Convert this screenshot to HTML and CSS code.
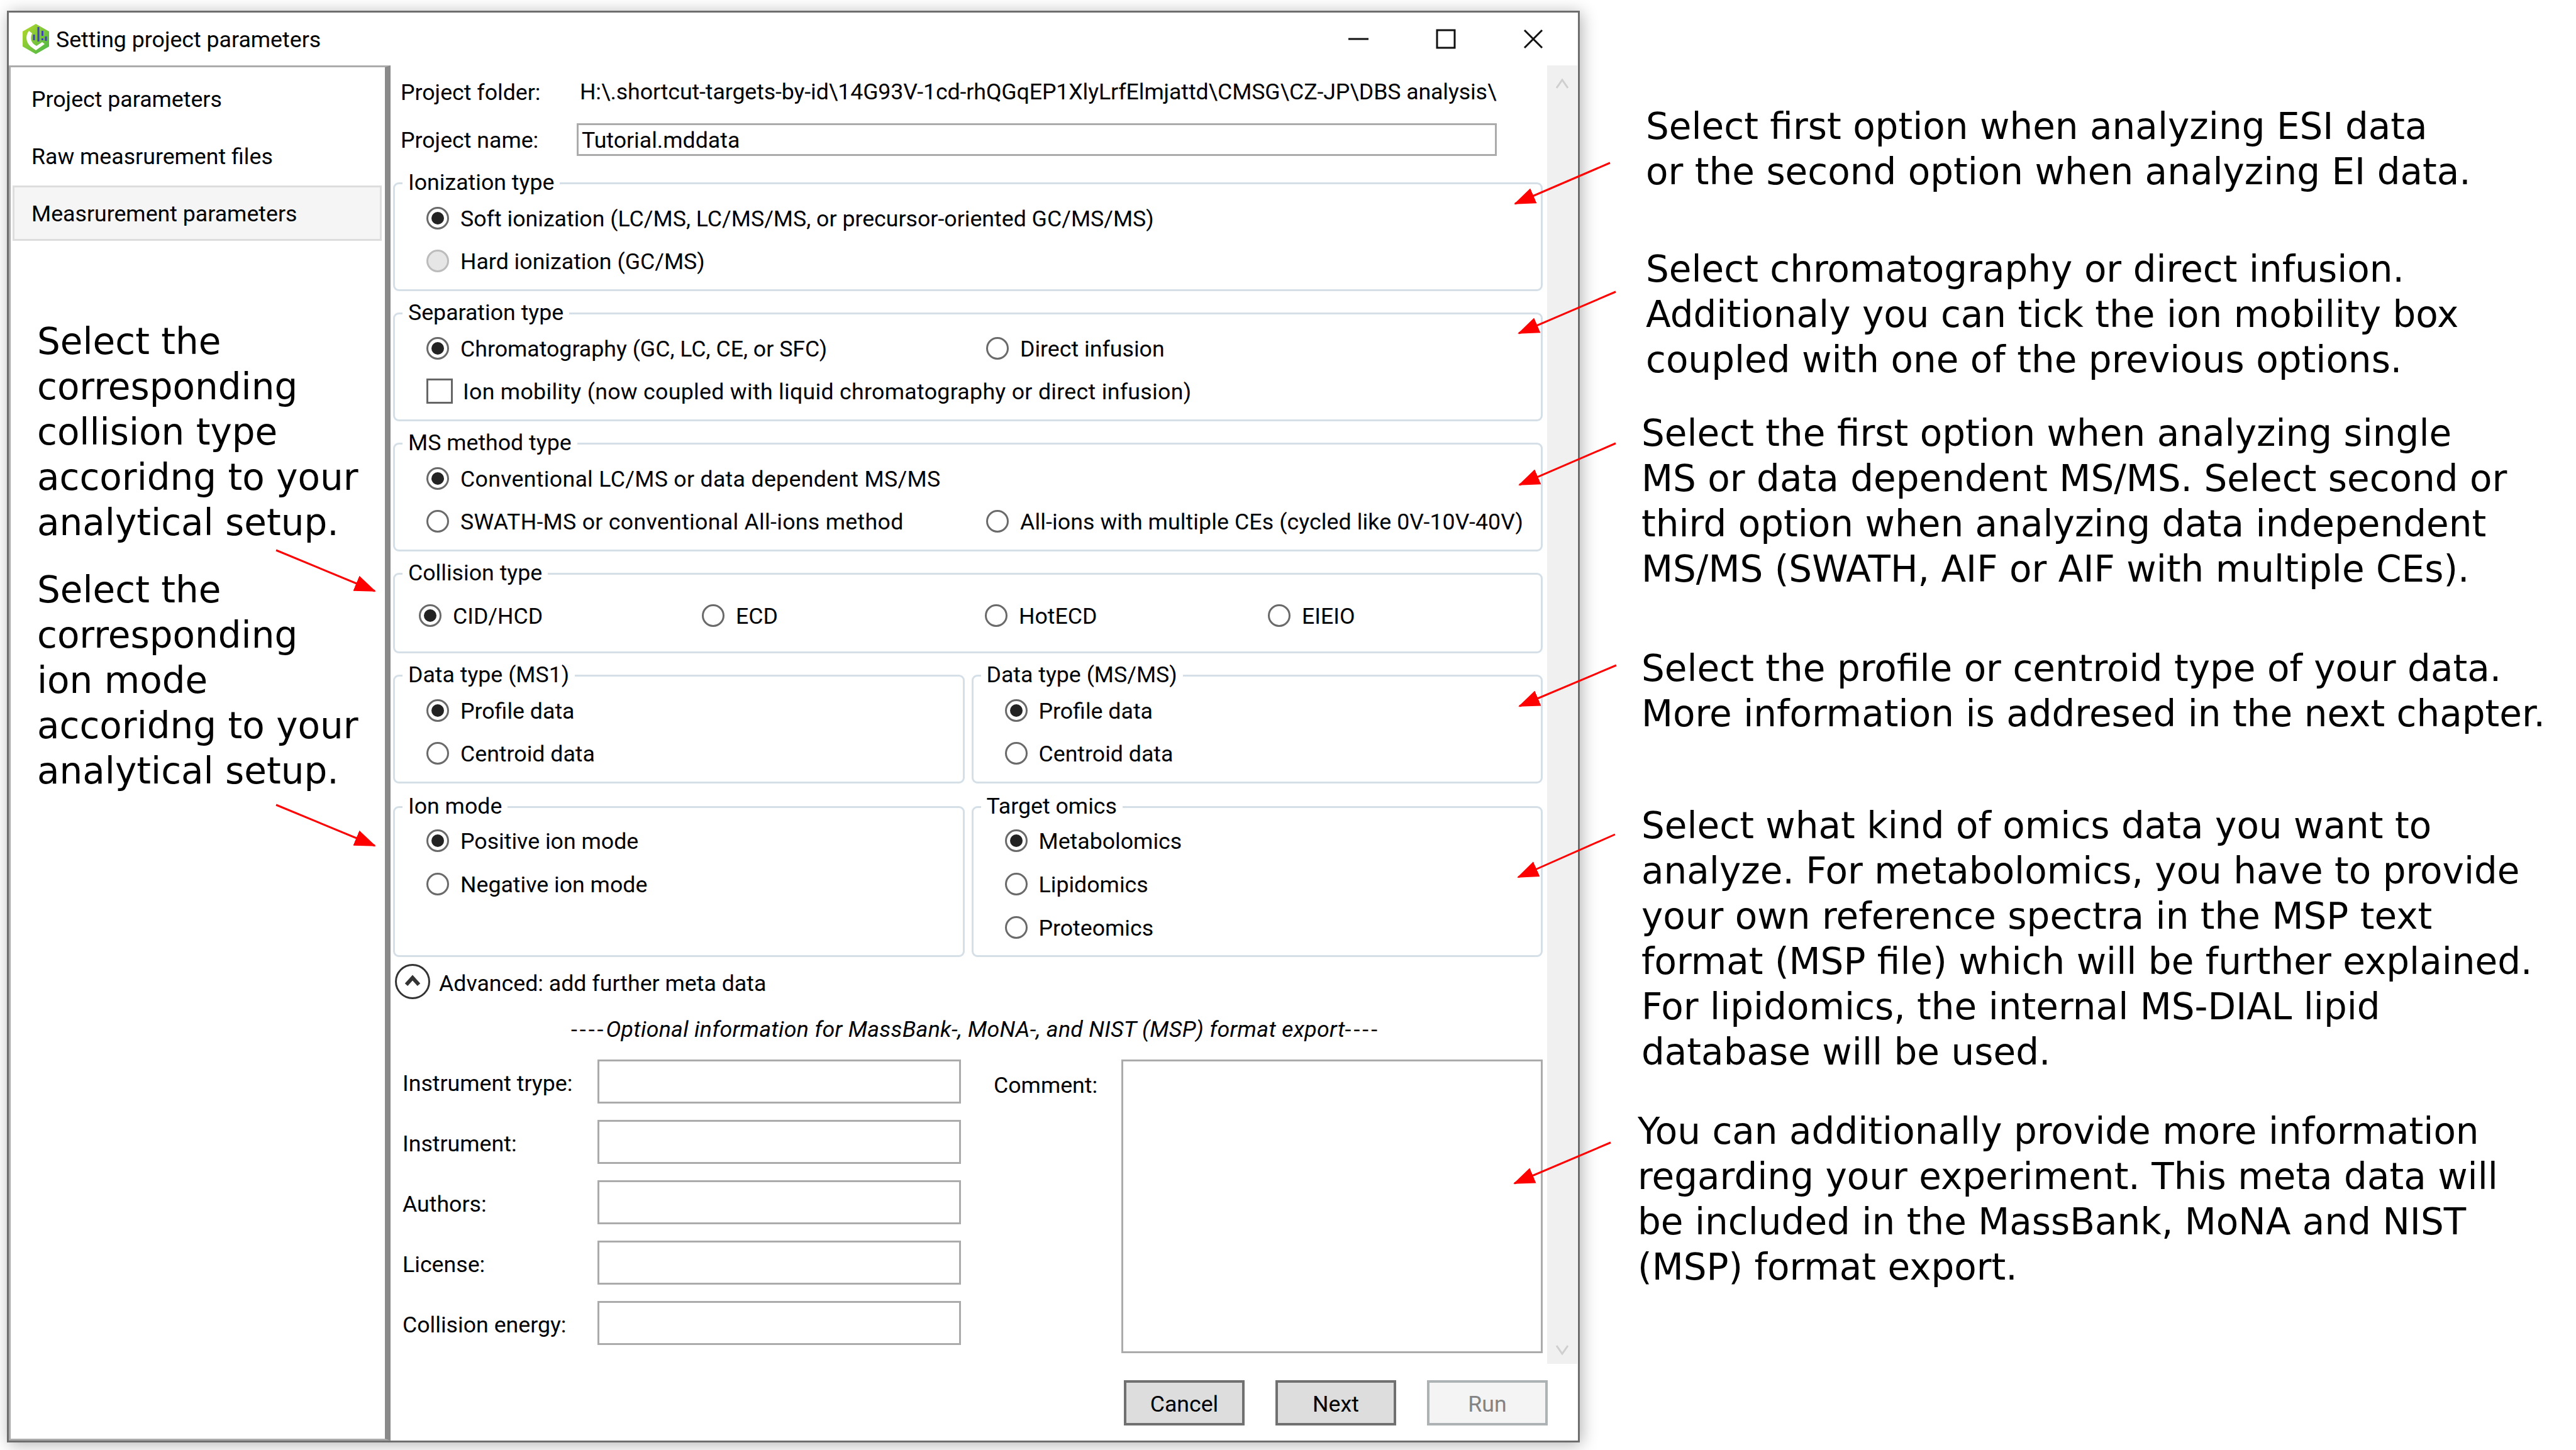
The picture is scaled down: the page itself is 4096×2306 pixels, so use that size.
FILE: index.html
```html
<!DOCTYPE html>
<html lang="en">
<head>
<meta charset="utf-8">
<title>Setting project parameters</title>
<link rel="stylesheet" href="styles.css">
</head>
<body>
<div class="page">
  <div class="window">
    <header class="titlebar">
      <svg class="logo" viewBox="0 0 42 48">
        <defs><linearGradient id="hex" x1="0" y1="0" x2="1" y2="1"><stop offset="0" stop-color="#b5d82a"/><stop offset="1" stop-color="#46b649"/></linearGradient></defs>
        <polygon points="21,0 42,12 42,36 21,48 0,36 0,12" fill="url(#hex)"/>
        <path d="M10 11 C3 20 6 31 14 37 L21 42 L35 32 L31 29 L22 35 C14 31 11 24 15 15 Z" fill="#fff"/>
        <path d="M18 17v9M25 5v23M31.5 11v8M31.5 23v3M37 20v7" stroke="#3f45a8" stroke-width="3" fill="none"/>
      </svg>
      <span class="title">Setting project parameters</span>
      <div class="controls">
        <span class="control"><svg viewBox="0 0 32 32"><path d="M0 16H32" /></svg></span>
        <span class="control"><svg viewBox="0 0 32 32"><rect x="2" y="2" width="28" height="28"/></svg></span>
        <span class="control"><svg viewBox="0 0 32 32"><path d="M2 2L30 30M30 2L2 30"/></svg></span>
      </div>
    </header>
    <div class="body">
      <aside class="sidebar">
        <nav class="nav">
          <div class="nav-item">Project parameters</div>
          <div class="nav-item">Raw measrurement files</div>
          <div class="nav-item selected">Measrurement parameters</div>
        </nav>
        <div class="side-notes">
          <p class="note">Select the<br>corresponding<br>collision type<br>accoridng to your<br>analytical setup.</p>
          <p class="note">Select the<br>corresponding<br>ion mode<br>accoridng to your<br>analytical setup.</p>
        </div>
      </aside>
      <main class="main">
        <div class="content">
          <div class="form-row"><span class="row-label">Project folder:</span><span class="folder">H:\.shortcut-targets-by-id\14G93V-1cd-rhQGqEP1XlyLrfElmjattd\CMSG\CZ-JP\DBS analysis\</span></div>
          <div class="form-row"><span class="row-label">Project name:</span><div class="name-box">Tutorial.mddata</div></div>

          <div class="groups">
            <section class="group h-std">
              <span class="legend">Ionization type</span>
              <div class="option"><span class="radio on"></span>Soft ionization (LC/MS, LC/MS/MS, or precursor-oriented GC/MS/MS)</div>
              <div class="option"><span class="radio off"></span>Hard ionization (GC/MS)</div>
            </section>
            <section class="group h-std">
              <span class="legend">Separation type</span>
              <div class="option"><div class="cell wide"><span class="radio on"></span>Chromatography (GC, LC, CE, or SFC)</div><div class="cell"><span class="radio"></span>Direct infusion</div></div>
              <div class="option spread"><span class="check"></span>Ion mobility (now coupled with liquid chromatography or direct infusion)</div>
            </section>
            <section class="group h-std">
              <span class="legend">MS method type</span>
              <div class="option spread"><span class="radio on"></span>Conventional LC/MS or data dependent MS/MS</div>
              <div class="option"><div class="cell wide spread"><span class="radio"></span>SWATH-MS or conventional All-ions method</div><div class="cell slight"><span class="radio"></span>All-ions with multiple CEs (cycled like 0V-10V-40V)</div></div>
            </section>
            <section class="group h-collision">
              <span class="legend">Collision type</span>
              <div class="option">
                <div class="cell four"><span class="radio on"></span>CID/HCD</div>
                <div class="cell four"><span class="radio"></span>ECD</div>
                <div class="cell four"><span class="radio"></span>HotECD</div>
                <div class="cell four"><span class="radio"></span>EIEIO</div>
              </div>
            </section>
            <div class="pair">
              <section class="group h-std half">
                <span class="legend">Data type (MS1)</span>
                <div class="option"><span class="radio on"></span>Profile data</div>
                <div class="option"><span class="radio"></span>Centroid data</div>
              </section>
              <section class="group h-std half">
                <span class="legend">Data type (MS/MS)</span>
                <div class="option"><span class="radio on"></span>Profile data</div>
                <div class="option"><span class="radio"></span>Centroid data</div>
              </section>
            </div>
            <div class="pair lower">
              <section class="group h-tall half">
                <span class="legend">Ion mode</span>
                <div class="option"><span class="radio on"></span>Positive ion mode</div>
                <div class="option"><span class="radio"></span>Negative ion mode</div>
              </section>
              <section class="group h-tall half">
                <span class="legend">Target omics</span>
                <div class="option"><span class="radio on"></span>Metabolomics</div>
                <div class="option"><span class="radio"></span>Lipidomics</div>
                <div class="option"><span class="radio"></span>Proteomics</div>
              </section>
            </div>
          </div>

          <div class="advanced">
            <svg class="expander" viewBox="0 0 56 56"><circle cx="28" cy="28" r="26.5"/><path d="M18 33L28 22L38 33"/></svg>
            <span class="advanced-label">Advanced: add further meta data</span>
          </div>
          <div class="optional"><span class="dashes">----</span><em>Optional information for MassBank-, MoNA-, and NIST (MSP) format export</em><span class="dashes">----</span></div>

          <div class="meta">
            <div class="fields">
              <div class="field"><span class="field-label">Instrument trype:</span><div class="box"></div></div>
              <div class="field"><span class="field-label">Instrument:</span><div class="box"></div></div>
              <div class="field"><span class="field-label">Authors:</span><div class="box"></div></div>
              <div class="field"><span class="field-label">License:</span><div class="box"></div></div>
              <div class="field"><span class="field-label">Collision energy:</span><div class="box"></div></div>
            </div>
            <div class="comment">
              <span class="comment-label">Comment:</span>
              <div class="comment-box"></div>
            </div>
          </div>
        </div>
        <div class="scrollbar">
          <svg viewBox="0 0 20 16"><path d="M1 15L10 2L19 15"/></svg>
          <svg viewBox="0 0 20 16"><path d="M1 1L10 14L19 1"/></svg>
        </div>
        <footer class="actions">
          <div class="btn">Cancel</div>
          <div class="btn">Next</div>
          <div class="btn disabled">Run</div>
        </footer>
      </main>
    </div>
  </div>
  <div class="notes">
    <p class="note n1">Select first option when analyzing ESI data<br>or the second option when analyzing EI data.</p>
    <p class="note n2">Select chromatography or direct infusion.<br>Additionaly you can tick the ion mobility box<br>coupled with one of the previous options.</p>
    <p class="note n3">Select the first option when analyzing single<br>MS or data dependent MS/MS. Select second or<br>third option when analyzing data independent<br>MS/MS (SWATH, AIF or AIF with multiple CEs).</p>
    <p class="note n4">Select the profile or centroid type of your data.<br>More information is addresed in the next chapter.</p>
    <p class="note n5">Select what kind of omics data you want to<br>analyze. For metabolomics, you have to provide<br>your own reference spectra in the MSP text<br>format (MSP file) which will be further explained.<br>For lipidomics, the internal MS-DIAL lipid<br>database will be used.</p>
    <p class="note n6">You can additionally provide more information<br>regarding your experiment. This meta data will<br>be included in the MassBank, MoNA and NIST<br>(MSP) format export.</p>
  </div>
  <svg class="arrows" viewBox="0 0 4096 2306">
    <defs><marker id="head" markerUnits="userSpaceOnUse" markerWidth="34" markerHeight="28" refX="32" refY="14" orient="auto"><polygon points="0,1 34,14 0,27" fill="#ff0000"/></marker></defs>
    <line x1="2560" y1="259" x2="2409" y2="324"/>
    <line x1="2569" y1="464" x2="2415" y2="530"/>
    <line x1="2569" y1="705" x2="2416" y2="771"/>
    <line x1="2570" y1="1058" x2="2416" y2="1123"/>
    <line x1="2568" y1="1327" x2="2414" y2="1395"/>
    <line x1="2561" y1="1817" x2="2408" y2="1882"/>
    <line x1="439" y1="875" x2="596" y2="940"/>
    <line x1="439" y1="1280" x2="596" y2="1345"/>
  </svg>
</div>
</body>
</html>
```

FILE: styles.css
```css
* { box-sizing: border-box; }
html, body { margin: 0; padding: 0; background: #fff; }
body { width: 4096px; height: 2306px; overflow: hidden; }

.page {
  position: relative;
  width: 4096px;
  height: 2306px;
  display: flex;
  align-items: flex-start;
  padding: 17px 0 0 11px;
  color: #000;
  font-family: "Roboto", "Liberation Sans", sans-serif;
  font-size: 35.7px;
  line-height: 44px;
}

/* window chrome */
.window {
  width: 2501px;
  height: 2277px;
  flex: none;
  display: flex;
  flex-direction: column;
  background: #fff;
  border: 3px solid #6e6e6e;
  box-shadow: 3px 3px 24px rgba(0, 0, 0, .3);
}
.titlebar {
  height: 84px;
  flex: none;
  display: flex;
  align-items: center;
  padding-left: 22px;
}
.title { padding-top: 2px; }
.logo { width: 42px; height: 48px; flex: none; margin-right: 11px; }
.controls { display: flex; margin-left: auto; padding-right: 2px; }
.control { width: 139px; height: 84px; display: flex; align-items: center; justify-content: center; }
.control svg { width: 32px; height: 32px; fill: none; stroke: #111; stroke-width: 3; }

.body { flex: 1; display: flex; min-height: 0; }

/* sidebar */
.sidebar {
  width: 607px;
  flex: none;
  padding: 6px 5px 0 3px;
  border: 3px solid #ababab;
  border-right: 9px solid #8a8a8a;
}
.nav-item { height: 88px; margin-bottom: 3px; padding: 2px 0 0 30px; display: flex; align-items: center; }
.nav-item.selected { background: #f5f5f5; border: 3px solid #ddd; margin-bottom: 0; padding-left: 27px; }
.side-notes { padding: 124px 0 0 39px; display: flex; flex-direction: column; gap: 35px; }

/* annotation text */
.note {
  margin: 0;
  white-space: nowrap;
  font-family: "DejaVu Sans", "Noto Sans", sans-serif;
  font-size: 58px;
  line-height: 72px;
}
.notes { padding: 148px 0 0 98px; display: flex; flex-direction: column; align-items: flex-start; }
.n1 { margin-left: 7px; }
.n2 { margin: 83px 0 0 7px; }
.n3 { margin-top: 45px; }
.n4 { margin-top: 86px; }
.n5 { margin-top: 106px; }
.n6 { margin: 54px 0 0 -6px; }

.arrows { position: absolute; left: 0; top: 0; width: 4096px; height: 2306px; pointer-events: none; }
.arrows line { stroke: #ff0000; stroke-width: 3; marker-end: url(#head); }

/* main panel */
.main {
  flex: 1;
  display: grid;
  grid-template-columns: 1fr 48px;
  grid-template-rows: 2065px 1fr;
  padding-right: 1px;
}
.content { padding: 4px 7px 0 4px; min-width: 0; }
.scrollbar {
  background: #f0f0f0;
  display: flex;
  flex-direction: column;
  justify-content: space-between;
  align-items: center;
  padding: 21px 0 14px;
}
.scrollbar svg { width: 20px; height: 16px; fill: none; stroke: #cfcfcf; stroke-width: 3; }

.form-row { height: 76px; display: flex; align-items: center; padding-left: 12px; }
.row-label { width: 280px; flex: none; padding-top: 2px; }
.folder { padding-left: 5px; white-space: nowrap; letter-spacing: -.1px; }
.name-box { width: 1463px; height: 52px; border: 3px solid #ababab; padding-left: 5px; line-height: 48px; }

/* group boxes */
.groups { margin-top: 30px; display: flex; flex-direction: column; gap: 34px; }
.group {
  position: relative;
  border: 3px solid #d5dfe7;
  border-radius: 9px;
  padding: 20px 0 0 50px;
}
.h-std { height: 173px; }
.h-collision { height: 128px; padding: 31px 0 0 38px; }
.h-tall { height: 240px; padding-top: 17px; }
.h-tall .option { height: 69px; }
.legend {
  position: absolute;
  left: 12px;
  top: -25px;
  background: #fff;
  padding: 0 9px;
  white-space: nowrap;
}
.option { height: 68px; display: flex; align-items: center; white-space: nowrap; padding-top: 2px; }
.spread { letter-spacing: .3px; }
.slight { letter-spacing: .1px; }
.cell { display: flex; align-items: center; flex: none; }
.cell.wide { width: 890px; }
.cell.four { width: 450px; }
.radio {
  width: 36px;
  height: 36px;
  flex: none;
  margin: -2px 18px 0 0;
  border-radius: 50%;
  border: 3px solid #6a6a6a;
  background: #fff;
  display: flex;
  align-items: center;
  justify-content: center;
}
.radio.on::after { content: ""; width: 20px; height: 20px; border-radius: 50%; background: #222; }
.radio.off { background: #e6e6e6; border-color: #bcbcbc; }
.check { width: 42px; height: 40px; flex: none; margin: -2px 16px 0 0; border: 3px solid #666; }
.pair { display: flex; gap: 11px; }
.pair.lower { margin-top: 2px; }
.half { flex: 1; min-width: 0; }

/* advanced */
.advanced { margin: 11px 0 0 3px; height: 56px; display: flex; align-items: center; gap: 14px; }
.advanced-label { padding-top: 5px; }
.expander { width: 56px; height: 56px; flex: none; fill: none; stroke: #333; }
.expander circle { stroke-width: 3; }
.expander path { stroke-width: 6; }
.optional { margin-top: 26px; height: 44px; text-align: center; padding-left: 24px; white-space: nowrap; }
.optional em { letter-spacing: .3px; }
.dashes { letter-spacing: 4px; }

.meta { margin-top: 26px; display: flex; }
.fields { width: 903px; flex: none; padding-left: 15px; display: flex; flex-direction: column; gap: 26px; }
.field { display: flex; align-items: center; }
.field-label { width: 310px; flex: none; white-space: nowrap; padding-top: 5px; }
.box { width: 578px; height: 70px; border: 3px solid #ababab; }
.comment { flex: 1; display: flex; padding-left: 52px; }
.comment-label { width: 203px; flex: none; padding-top: 19px; }
.comment-box { flex: 1; height: 467px; border: 3px solid #ababab; }

/* buttons */
.actions { grid-column: 1 / -1; display: flex; gap: 49px; padding: 26px 0 0 1166px; }
.btn {
  width: 192px;
  height: 72px;
  padding-top: 3px;
  background: #ddd;
  border: 4px solid #707070;
  display: flex;
  align-items: center;
  justify-content: center;
}
.btn.disabled { background: #f4f4f4; border-color: #adb2b5; color: #838383; }
```
